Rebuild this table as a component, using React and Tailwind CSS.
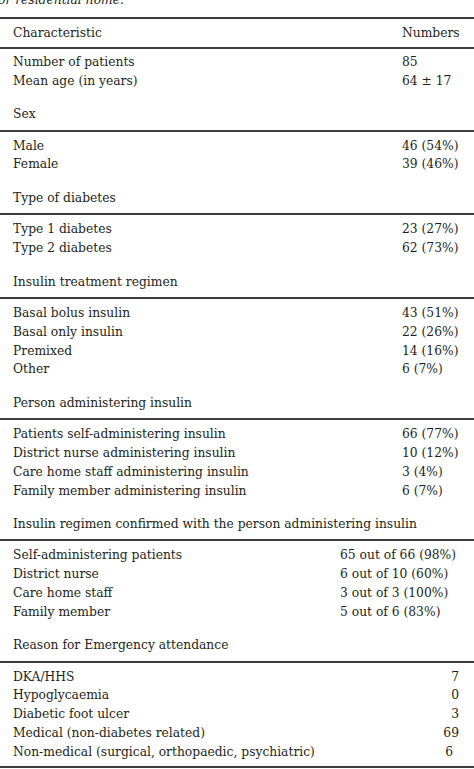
import React from "react";

const font = { fontFamily: '"DejaVu Serif", "Liberation Serif", serif' };

const sections = [
  {
    label: "Sex",
    rows: [
      ["Male", "46 (54%)"],
      ["Female", "39 (46%)"],
    ],
  },
  {
    label: "Type of diabetes",
    rows: [
      ["Type 1 diabetes", "23 (27%)"],
      ["Type 2 diabetes", "62 (73%)"],
    ],
  },
  {
    label: "Insulin treatment regimen",
    rows: [
      ["Basal bolus insulin", "43 (51%)"],
      ["Basal only insulin", "22 (26%)"],
      ["Premixed", "14 (16%)"],
      ["Other", "6 (7%)"],
    ],
  },
  {
    label: "Person administering insulin",
    rows: [
      ["Patients self-administering insulin", "66 (77%)"],
      ["District nurse administering insulin", "10 (12%)"],
      ["Care home staff administering insulin", "3 (4%)"],
      ["Family member administering insulin", "6 (7%)"],
    ],
  },
  {
    label: "Insulin regimen confirmed with the person administering insulin",
    wide: true,
    rows: [
      ["Self-administering patients", "65 out of 66 (98%)"],
      ["District nurse", "6 out of 10 (60%)"],
      ["Care home staff", "3 out of 3 (100%)"],
      ["Family member", "5 out of 6 (83%)"],
    ],
  },
  {
    label: "Reason for Emergency attendance",
    right: true,
    rows: [
      ["DKA/HHS", "7"],
      ["Hypoglycaemia", "0"],
      ["Diabetic foot ulcer", "3"],
      ["Medical (non-diabetes related)", "69"],
      ["Non-medical (surgical, orthopaedic, psychiatric)", "6", true],
    ],
  },
];

const Row = ({ label, value, wide, right, shift }) => (
  <div className="flex items-center h-[18.75px] pl-[13px]">
    <div className="flex-1 whitespace-nowrap">{label}</div>
    {right ? (
      <div className={`w-[60px] text-right ${shift ? "pr-[21px]" : "pr-[15px]"}`}>
        {value}
      </div>
    ) : (
      <div className={`${wide ? "w-[134px]" : "w-[72px]"} whitespace-nowrap`}>
        {value}
      </div>
    )}
  </div>
);

export default function App() {
  return (
    <div
      className="w-[474px] h-[769px] overflow-hidden bg-white text-[#231f20] text-[12.3px] leading-[18.75px]"
      style={font}
    >
      {/* caption, cut off by the crop */}
      <div className="h-[17px] overflow-hidden">
        <div className="-mt-[9px] -ml-[2px] italic whitespace-nowrap">
          or residential home.
        </div>
      </div>

      <div className="border-t-2 border-b-2 border-[#3d3d3d]">
        <div className="flex items-center h-[28px] pl-[13px]">
          <div className="flex-1">Characteristic</div>
          <div className="w-[72px]">Numbers</div>
        </div>
      </div>

      <div className="pt-[4px]">
        <Row label="Number of patients" value="85" />
        <Row label="Mean age (in years)" value="64 ± 17" />
      </div>

      {sections.map((s, i) => (
        <div key={i}>
          <div className="pt-[14.75px] pb-[5.6px] border-b-2 border-[#3d3d3d]">
            <div className="flex items-center h-[18.75px] pl-[13px] whitespace-nowrap">
              {s.label}
            </div>
          </div>
          <div
            className={`pt-[5.1px] ${
              i === sections.length - 1 ? "pb-[4.6px] border-b-2 border-[#3d3d3d]" : ""
            }`}
          >
            {s.rows.map((r, j) => (
              <Row
                key={j}
                label={r[0]}
                value={r[1]}
                wide={s.wide}
                right={s.right}
                shift={r[2]}
              />
            ))}
          </div>
        </div>
      ))}
    </div>
  );
}
